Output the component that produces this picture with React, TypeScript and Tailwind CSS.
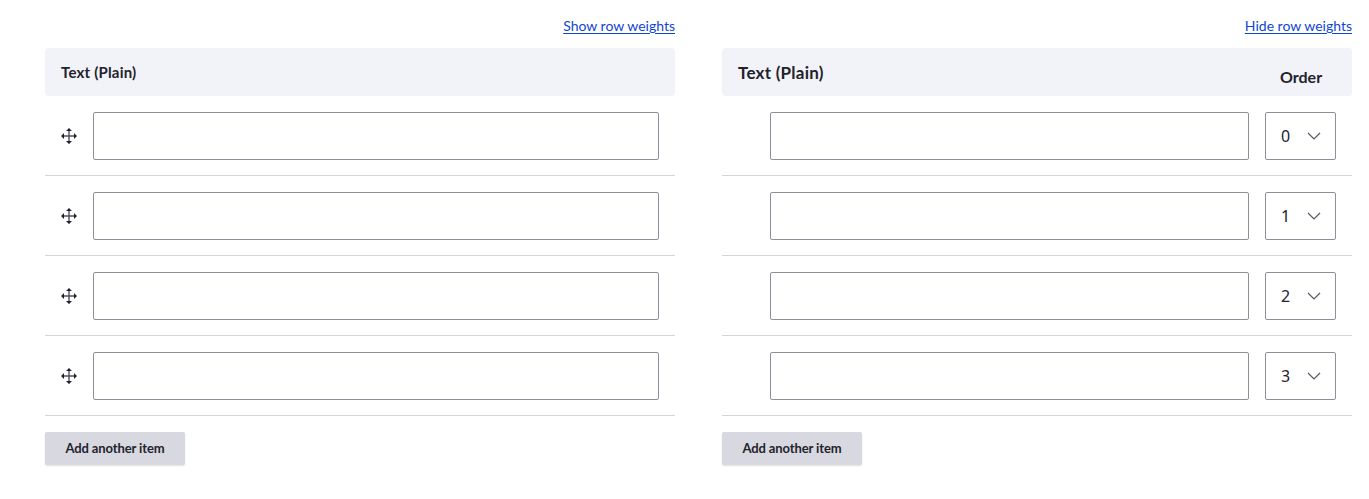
function MoveIcon() {
  return (
    <svg width="18" height="18" viewBox="0 0 18 18" className="-ml-px mt-[15px] text-[#22222c]">
      <path d="M9 3v12M3 9h12" stroke="currentColor" strokeWidth="1.4" strokeOpacity="0.8" fill="none" />
      <path d="M9 1l3 3h-6zM9 17l3-3h-6zM1 9l3-3v6zM17 9l-3-3v6z" fill="currentColor" />
    </svg>
  );
}

function Chevron() {
  return (
    <svg width="14" height="8" viewBox="0 0 14 8" fill="none" className="text-[#55565f]">
      <path d="M1 1l6 6 6-6" stroke="currentColor" strokeWidth="1.2" />
    </svg>
  );
}

function AddButton() {
  return (
    <button className="mt-4 h-[33px] w-[140px] rounded-[2px] bg-[#d8d9e0] pt-px text-[13px] font-bold tracking-[-0.1px] text-[#22222c] shadow-[0_1px_2px_rgba(0,0,0,0.12)]">
      Add another item
    </button>
  );
}

function PlainPanel() {
  return (
    <div className="w-[630px]">
      <div className="flex h-[48px] items-start justify-end text-[14px]">
        <a href="#" className="mt-[15px] leading-[22px] text-[#0f46d2] underline underline-offset-2">
          Show row weights
        </a>
      </div>
      <div className="flex h-[48px] items-center rounded-[4px] bg-[#f2f3f8] px-4 text-[15px] font-bold tracking-[0.2px] text-[#22222c]">
        Text (Plain)
      </div>
      {[0, 1, 2, 3].map((row) => (
        <div key={row} className="flex h-[80px] items-start border-b border-[#d3d3d8] px-4 pt-4">
          <div className="flex w-[32px] shrink-0">
            <MoveIcon />
          </div>
          <div className="h-[48px] flex-1 rounded-[2px] border border-[#8e8f99] bg-white" />
        </div>
      ))}
      <AddButton />
    </div>
  );
}

function WeightPanel() {
  return (
    <div className="w-[630px]">
      <div className="flex h-[48px] items-start justify-end text-[14px]">
        <a href="#" className="mt-[15px] leading-[22px] text-[#0f46d2] underline underline-offset-2">
          Hide row weights
        </a>
      </div>
      <div className="relative flex h-[48px] items-center rounded-[4px] bg-[#f2f3f8] px-4 text-[17px] font-bold tracking-[0.25px] text-[#22222c]">
        <span className="mt-px">Text (Plain)</span>
        <span className="absolute left-[558px] top-[19px] text-[16px] leading-[20px] tracking-normal">Order</span>
      </div>
      {[0, 1, 2, 3].map((row) => (
        <div key={row} className="flex h-[80px] items-start gap-4 border-b border-[#d3d3d8] pl-[48px] pr-4 pt-4">
          <div className="h-[48px] flex-1 rounded-[2px] border border-[#8e8f99] bg-white" />
          <div className="flex h-[48px] w-[71px] items-center justify-between rounded-[2px] border border-[#8e8f99] bg-white pl-[15px] pr-[14px] font-['Noto_Sans',sans-serif] text-[16px] text-[#22222c]">
            <span>{row}</span>
            <Chevron />
          </div>
        </div>
      ))}
      <AddButton />
    </div>
  );
}

export default function App() {
  return (
    <div className="flex h-[499px] gap-[47px] bg-white pl-[45px] font-['Lato',sans-serif]">
      <PlainPanel />
      <WeightPanel />
    </div>
  );
}
